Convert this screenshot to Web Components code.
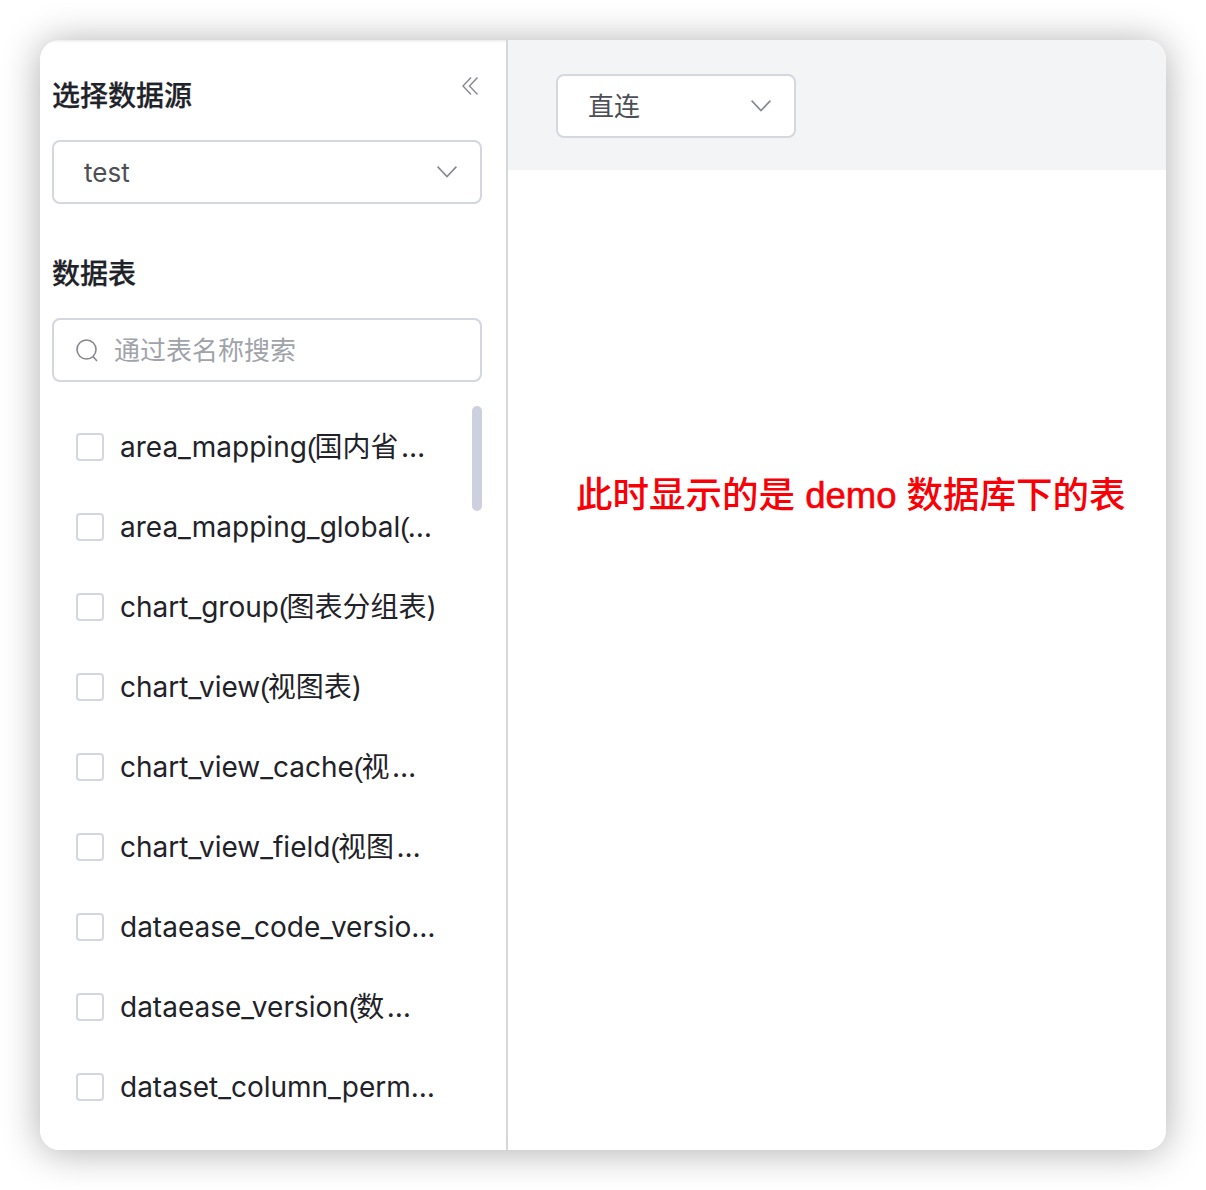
<!DOCTYPE html>
<html lang="zh">
<head>
<meta charset="utf-8">
<title>数据表</title>
<style>
html,body{margin:0;background:#fff;}
body{font-family:Inter,"Noto Sans CJK SC",sans-serif;color:#1f2329;}
</style>
</head>
<body>
<app-window>
  <data-sidebar slot="side">
    <drop-select slot="source" value="test"></drop-select>
    <search-box slot="search" placeholder="通过表名称搜索"></search-box>
    <table-row>area_mapping<i>(</i>国内省<em>…</em></table-row>
    <table-row>area_mapping_global<i>(</i>…</table-row>
    <table-row>chart_group<i>(</i>图表分组表)</table-row>
    <table-row>chart_view<i>(</i>视图表)</table-row>
    <table-row>chart_view_cache<i>(</i>视<em>…</em></table-row>
    <table-row>chart_view_field<i>(</i>视图<em>…</em></table-row>
    <table-row>dataease_code_versio…</table-row>
    <table-row>dataease_version<i>(</i>数<em>…</em></table-row>
    <table-row>dataset_column_perm…</table-row>
  </data-sidebar>
  <main-pane slot="main">
    <drop-select slot="mode" value="直连" narrow></drop-select>
    此时显示的是 <b>demo</b> 数据库下的表
  </main-pane>
</app-window>
<script>
const chevron=`<svg width="20" height="12" viewBox="0 0 20 12" fill="none" stroke="#85888f" stroke-width="1.6"><path d="M.6.6 10 10.6 19.4.6"/></svg>`;

class AppWindow extends HTMLElement{
    constructor(){
        super();
        this.attachShadow({mode:'open'}).innerHTML=`
<style>
:host{display:block;padding:40px;}
.win{
    display:flex;
    height:1110px;
    background:#fff;
    border-radius:20px;
    overflow:hidden;
}
.shadow{border-radius:20px;box-shadow:0 2px 38px rgba(0,0,0,.32);}
</style>
<div class="shadow"><div class="win"><slot name="side"></slot><slot name="main"></slot></div></div>`;
    }
}

class DataSidebar extends HTMLElement{
    constructor(){
        super();
        this.attachShadow({mode:'open'}).innerHTML=`
<style>
:host{
    display:block;
    box-sizing:border-box;
    width:468px;
    flex:none;
    padding:0 24px 0 12px;
    border-right:2px solid #d5d7dc;
    box-shadow:inset 0 3px 3px -2px rgba(0,0,0,.1);
}
.head{display:flex;justify-content:space-between;align-items:flex-start;margin-top:37px;margin-bottom:25px;}
h2{margin:0;font-size:28px;line-height:38px;font-weight:500;-webkit-text-stroke:.25px #1f2329;}
.head svg{margin:0 4px 0 0;}
.sec{margin:51px 0 25px;}
.list{position:relative;margin-top:25px;}
.thumb{position:absolute;top:-1px;right:0;width:10px;height:105px;border-radius:5px;background:#cdd0de;}
</style>
<div class="head">
  <h2>选择数据源</h2>
  <svg width="16" height="18" viewBox="0 0 16 18" fill="none" stroke="#85888f" stroke-width="1.4"><path d="M9 .5 1 9l8 8.500M15.500.5 7.500 9l8 8.500"/></svg>
</div>
<slot name="source"></slot>
<h2 class="sec">数据表</h2>
<slot name="search"></slot>
<div class="list"><slot></slot><div class="thumb"></div></div>`;
    }
}

class DropSelect extends HTMLElement{
    constructor(){
        super();
        this.attachShadow({mode:'open'}).innerHTML=`
<style>
:host{
    display:flex;
    align-items:center;
    justify-content:space-between;
    box-sizing:border-box;
    height:64px;
    padding:0 23px 0 30px;
    border:2px solid #d5d7e0;
    border-radius:8px;
    background:#fff;
    font-size:26px;
    line-height:36px;
    color:#4c4f55;
}
:host([narrow]){width:240px;}
span{padding-top:2px;}
</style>
<span>${this.getAttribute('value')}</span>${chevron}`;
    }
}

class SearchBox extends HTMLElement{
    constructor(){
        super();
        this.attachShadow({mode:'open'}).innerHTML=`
<style>
:host{
    display:flex;
    align-items:center;
    gap:16px;
    box-sizing:border-box;
    height:64px;
    padding:0 22px;
    border:2px solid #d5d7e0;
    border-radius:8px;
    font-size:26px;
    line-height:36px;
    color:#a0a3aa;
}
span{padding-top:2px;}
</style>
<svg width="22" height="24" viewBox="0 0 22 24" fill="none" stroke="#85888f" stroke-width="1.6"><circle cx="10.500" cy="11.500" r="9.500"/><path d="m17 18.500 4 4.500"/></svg>
<span>${this.getAttribute('placeholder')}</span>`;
    }
}

class TableRow extends HTMLElement{
    constructor(){
        super();
        this.attachShadow({mode:'open'}).innerHTML=`
<style>
:host{
    display:flex;
    align-items:center;
    gap:16px;
    height:80px;
    padding-left:24px;
    font-size:28px;
    line-height:38px;
    white-space:nowrap;
}
.box{box-sizing:border-box;width:28px;height:28px;flex:none;border:2px solid #d5d7e0;border-radius:4px;background:#fff;}
::slotted(i){font-style:normal;font-family:"Liberation Sans",sans-serif;letter-spacing:-1.8px;}
::slotted(em){font-style:normal;margin-left:2.5px;}
</style>
<span class="box"></span><span><slot></slot></span>`;
    }
}

class MainPane extends HTMLElement{
    constructor(){
        super();
        this.attachShadow({mode:'open'}).innerHTML=`
<style>
:host{display:block;flex:1;min-width:0;}
.bar{box-sizing:border-box;height:130px;padding:34px 48px 32px;background:#f3f4f6;}
.note{padding:304px 0 0 68px;font-family:"Liberation Sans","Noto Sans CJK SC",sans-serif;font-size:36.5px;line-height:44px;font-weight:500;color:#f90006;white-space:nowrap;}
::slotted(b){font-weight:400;-webkit-text-stroke:.6px #f90006;}
</style>
<div class="bar"><slot name="mode"></slot></div>
<div class="note"><slot></slot></div>`;
    }
}

customElements.define('app-window',AppWindow);
customElements.define('data-sidebar',DataSidebar);
customElements.define('drop-select',DropSelect);
customElements.define('search-box',SearchBox);
customElements.define('table-row',TableRow);
customElements.define('main-pane',MainPane);
</script>
</body>
</html>
